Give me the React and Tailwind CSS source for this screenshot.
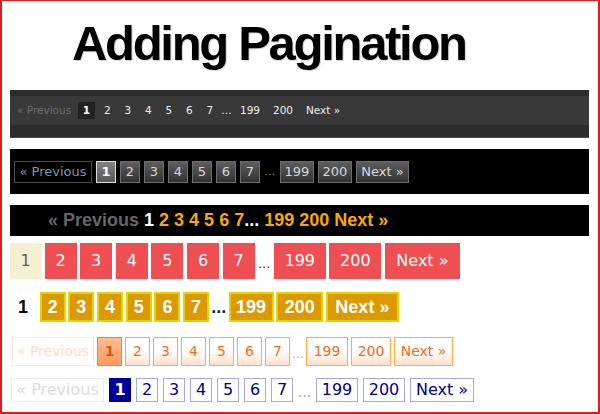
import React from "react";

const mids = ["2", "3", "4", "5", "6", "7"];

// koyu gri şerit, küçük yazı
function DarkStrip() {
  return (
    <div className="ml-[8px] w-[579px] h-[48px] bg-[#2c2c2c] pt-[6px] border-b border-[#4d4d4d]">
      <div className="h-[29px] bg-[#393939] flex items-center pl-[7px] text-[10.5px] text-[#f0f0f0] font-['DejaVu_Sans',sans-serif]">
        <span className="w-[61px] text-[#6e6e6e]">« Previous</span>
        <span className="w-[17px] h-[17px] mr-[2px] bg-[#222] flex items-center justify-center font-bold text-white">
          1
        </span>
        {mids.map((p) => (
          <span key={p} className="w-[20.5px] text-center">
            {p}
          </span>
        ))}
        <span className="w-[13px] text-center">…</span>
        <span className="w-[34px] text-center">199</span>
        <span className="w-[32px] text-center">200</span>
        <span className="w-[48px] text-center">Next »</span>
      </div>
    </div>
  );
}

// siyah şerit, gri kutular
function BlackBoxes() {
  const box =
    "w-[20px] h-[22px] border border-[#6c6c6c] bg-linear-to-b from-[#5e5e5e] to-[#323232] text-[#d8d8d8] flex items-center justify-center";
  return (
    <div className="mt-[11px] ml-[8px] w-[579px] h-[45px] bg-black pt-[12px] pl-[4px] flex items-start gap-[4px] text-[13px] font-['DejaVu_Sans',sans-serif]">
      <span className="w-[78px] h-[22px] border border-[#4a4a4a] text-[#8494a8] flex items-center justify-center">
        « Previous
      </span>
      <span className="w-[20px] h-[22px] border border-[#dcdcdc] bg-linear-to-b from-[#808080] to-[#585858] text-white font-bold flex items-center justify-center">
        1
      </span>
      {mids.map((p) => (
        <span key={p} className={box}>
          {p}
        </span>
      ))}
      <span className="w-[12px] h-[22px] text-[#888] text-[11px] flex items-end justify-center pb-[3px]">
        ...
      </span>
      <span className="w-[34px] h-[22px] border border-[#6c6c6c] bg-linear-to-b from-[#5e5e5e] to-[#323232] text-[#d8d8d8] flex items-center justify-center">
        199
      </span>
      <span className="w-[34px] h-[22px] border border-[#6c6c6c] bg-linear-to-b from-[#5e5e5e] to-[#323232] text-[#d8d8d8] flex items-center justify-center">
        200
      </span>
      <span className="w-[53px] h-[22px] border border-[#6c6c6c] bg-linear-to-b from-[#5e5e5e] to-[#323232] text-[#d8d8d8] flex items-center justify-center">
        Next »
      </span>
    </div>
  );
}

// siyah şerit, turuncu kalın yazı
function OrangeText() {
  return (
    <div className="mt-[11px] ml-[8px] w-[579px] h-[31px] bg-black pl-[38px] leading-[31px] whitespace-pre font-['Liberation_Sans',Arial,sans-serif] font-bold text-[18px] text-[#f8a900]">
      <span className="text-[#666]">« Previous</span> <span className="text-white">1</span> 2 3 4 5 6 7
      <span className="text-white">...</span> 199 200 Next »
    </div>
  );
}

function RedBoxes() {
  const box = "w-[32px] bg-[#ef4e53] flex items-center justify-center";
  return (
    <div className="mt-[7px] ml-[8px] h-[36px] flex gap-[3.6px] text-[16px] text-white font-['DejaVu_Sans',sans-serif]">
      <span className="w-[31px] bg-[#f6f0d2] text-[#5e5e5e] flex items-center justify-center">1</span>
      {mids.map((p) => (
        <span key={p} className={box}>
          {p}
        </span>
      ))}
      <span className="w-[12px] text-[#333] text-[13px] flex items-center justify-center pt-[5px]">...</span>
      <span className="w-[52px] bg-[#ef4e53] flex items-center justify-center">199</span>
      <span className="w-[52px] bg-[#ef4e53] flex items-center justify-center">200</span>
      <span className="w-[75px] bg-[#ef4e53] flex items-center justify-center">Next »</span>
    </div>
  );
}

function AmberBoxes() {
  const box =
    "w-[26px] border-2 border-[#e3d300] bg-[#dc9900] flex items-center justify-center";
  return (
    <div className="mt-[13px] ml-[8px] h-[30px] flex gap-[2.7px] text-[18px] font-bold text-white font-['Liberation_Sans',Arial,sans-serif]">
      <span className="w-[27px] pl-[8px] text-black flex items-center">1</span>
      {mids.map((p) => (
        <span key={p} className={box}>
          {p}
        </span>
      ))}
      <span className="w-[14px] text-[#1c2440] flex items-center justify-center">...</span>
      <span className="w-[45px] border-2 border-[#e3d300] bg-[#dc9900] flex items-center justify-center">199</span>
      <span className="w-[47px] border-2 border-[#e3d300] bg-[#dc9900] flex items-center justify-center">200</span>
      <span className="w-[73px] border-2 border-[#e3d300] bg-[#dc9900] flex items-center justify-center">Next »</span>
    </div>
  );
}

function PeachBoxes() {
  const box =
    "w-[25px] border border-[#ffab45] bg-linear-to-b from-white from-45% to-[#fde0cb] flex items-center justify-center";
  return (
    <div className="mt-[15px] ml-[10px] h-[29px] flex gap-[3px] text-[14px] text-[#f26a1c] font-['DejaVu_Sans',sans-serif]">
      <span className="w-[82px] border border-[#fde9d7] text-[#fcdcbd] flex items-center justify-center">
        « Previous
      </span>
      <span className="w-[25px] border border-[#ff7d36] bg-linear-to-b from-[#ffbe90] to-[#ff9b60] text-[#d9560b] font-bold flex items-center justify-center">
        1
      </span>
      {mids.map((p) => (
        <span key={p} className={box}>
          {p}
        </span>
      ))}
      <span className="w-[10px] text-[#e8a070] text-[12px] flex items-center justify-center pt-[5px]">...</span>
      <span className="w-[42px] border border-[#ffab45] bg-linear-to-b from-white from-45% to-[#fde0cb] flex items-center justify-center">
        199
      </span>
      <span className="w-[40px] border border-[#ffab45] bg-linear-to-b from-white from-45% to-[#fde0cb] flex items-center justify-center">
        200
      </span>
      <span className="w-[59px] border border-[#ffab45] bg-linear-to-b from-white from-45% to-[#fde0cb] flex items-center justify-center">
        Next »
      </span>
    </div>
  );
}

function NavyBoxes() {
  const box = "w-[22px] border border-[#aaaad8] flex items-center justify-center";
  return (
    <div className="mt-[12px] ml-[9px] h-[24px] flex gap-[5px] text-[16px] text-[#000080] font-['DejaVu_Sans',sans-serif]">
      <span className="w-[93px] border border-[#ececec] text-[#dcdcdc] flex items-center justify-center">
        « Previous
      </span>
      <span className="w-[22px] border border-[#00009a] bg-[#00009a] text-white font-bold flex items-center justify-center">
        1
      </span>
      {mids.map((p) => (
        <span key={p} className={box}>
          {p}
        </span>
      ))}
      <span className="w-[13px] text-[#9a9a9a] text-[14px] flex items-center justify-center pt-[4px]">...</span>
      <span className="w-[42px] border border-[#aaaad8] flex items-center justify-center">199</span>
      <span className="w-[42px] border border-[#aaaad8] flex items-center justify-center">200</span>
      <span className="w-[64px] border border-[#aaaad8] flex items-center justify-center">Next »</span>
    </div>
  );
}

export default function App() {
  return (
    <div className="w-[600px] h-[414px] overflow-hidden bg-white border-x-2 border-b-2 border-t border-[#e3191b]">
      <div className="h-[89px] pt-[17.5px] pl-[70px]">
        <h1 className="text-[49px] leading-[49px] font-bold tracking-[-2.3px] text-black font-['Liberation_Sans',Arial,sans-serif] [text-shadow:1px_1px_1px_rgba(0,0,0,0.18)]">
          Adding Pagination
        </h1>
      </div>
      <DarkStrip />
      <BlackBoxes />
      <OrangeText />
      <RedBoxes />
      <AmberBoxes />
      <PeachBoxes />
      <NavyBoxes />
    </div>
  );
}
